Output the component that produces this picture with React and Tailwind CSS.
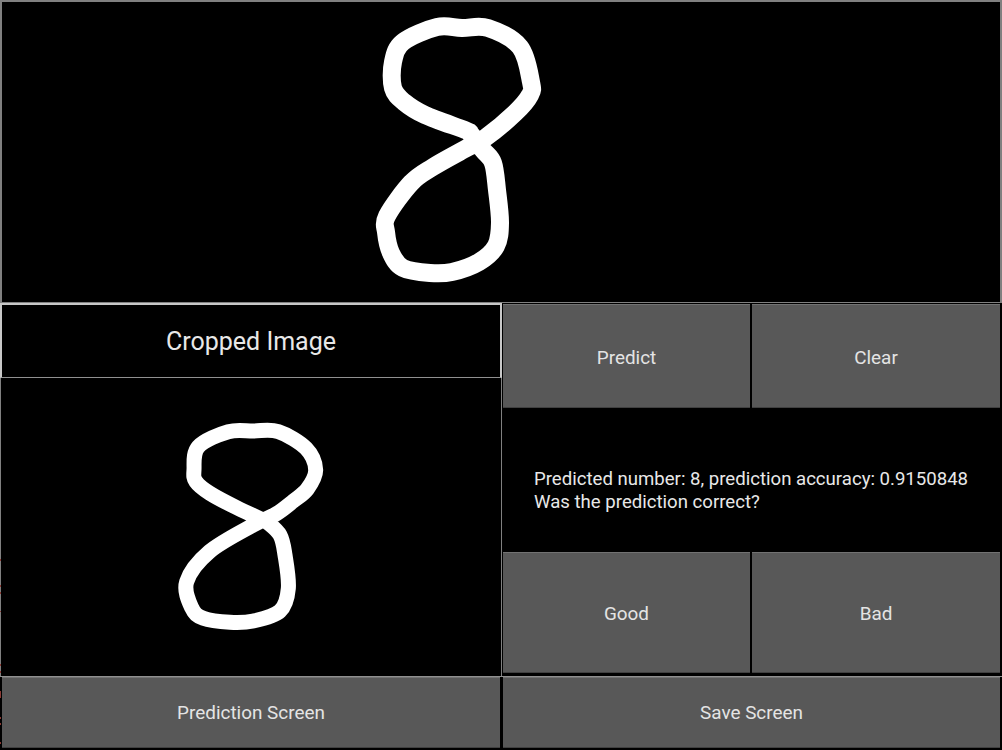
const big = [[470,133],[465,130],[425,115],[404,102],[393,88],[393,62],[403,42],[437,27],[462,28],[488,28],[520,47],[531,82],[530,95],[515,113],[485,138],[465,149],[433,167],[411,183],[387,216],[386,232],[391,253],[403,268],[430,273],[452,272],[479,262],[496,246],[500,223],[497,190],[493,163],[483,150],[470,133]];

const zoomSmall = [[290,320],[200,278],[120,235],[78,200],[72,165],[85,95],[175,50],[250,48],[325,50],[408,100],[437,165],[412,222],[370,258],[318,297],[250,330],[118,410],[50,500],[65,578],[100,610],[180,622],[250,618],[330,588],[355,520],[345,420],[330,360],[290,320]];
const small = zoomSmall.map(([x, y]) => [170 + x / 3, 415 + y / 3 - 378]);

const specks = [[559,2],[585,2],[592,2],[611,1],[664,2],[671,2],[691,7],[717,2],[723,2],[742,2]];

function smooth(p) {
  let d = `M${p[0][0]} ${p[0][1]}`;
  for (let i = 0; i < p.length - 1; i++) {
    const a = p[Math.max(i - 1, 0)], b = p[i], c = p[i + 1], e = p[Math.min(i + 2, p.length - 1)];
    d += ` C${b[0] + (c[0] - a[0]) / 6} ${b[1] + (c[1] - a[1]) / 6} ${c[0] - (e[0] - b[0]) / 6} ${c[1] - (e[1] - b[1]) / 6} ${c[0]} ${c[1]}`;
  }
  return d;
}

function Btn({ children, className = "" }) {
  return (
    <button className={`flex items-center justify-center bg-[#585858] border-t border-t-[#727272] border-b border-b-[#404040] text-[18.9px] text-[#e4e4e4] ${className}`}>
      {children}
    </button>
  );
}

export default function App() {
  return (
    <div className="relative w-[1002px] h-[750px] bg-black flex flex-col overflow-hidden font-['Roboto',sans-serif]">
      <div className="h-[303px] shrink-0 border-2 border-b border-[#808080] relative">
        <svg className="absolute top-[-2px] left-[-2px]" width="1002" height="303" viewBox="0 0 1002 303">
          <path d={smooth(big)} fill="none" stroke="#fff" strokeWidth="18" strokeLinejoin="round" strokeLinecap="round" />
        </svg>
      </div>
      <div className="h-[373px] shrink-0 flex">
        <div className="w-[502px] shrink-0 flex flex-col">
          <div className="h-[75px] shrink-0 border-2 border-b border-[#c8c8c8] border-b-[#909090] flex items-center justify-center text-[25px] text-[#e8e8e8] pt-[2px]">
            Cropped Image
          </div>
          <div className="flex-1 border-x border-[#808080] relative">
            <svg className="absolute top-0 left-[-1px]" width="502" height="298" viewBox="0 0 502 298">
              <path d={smooth(small)} fill="none" stroke="#fff" strokeWidth="15" strokeLinejoin="round" strokeLinecap="round" />
            </svg>
          </div>
        </div>
        <div className="flex-1 flex flex-col pl-[1px] pr-[2px] pt-[1px] pb-[3px]">
          <div className="h-[104px] shrink-0 flex gap-[2px]">
            <Btn className="w-[247px] pt-[4px]">Predict</Btn>
            <Btn className="flex-1 pt-[4px]">Clear</Btn>
          </div>
          <div className="flex-1 flex items-center pl-[31px] text-[18.6px] leading-[23px] text-[#e8e8e8] pt-[21px]">
            <p>Predicted number: 8, prediction accuracy: 0.9150848<br />Was the prediction correct?</p>
          </div>
          <div className="h-[121px] shrink-0 flex gap-[2px]">
            <Btn className="w-[247px] pt-[4px]">Good</Btn>
            <Btn className="flex-1 pt-[4px]">Bad</Btn>
          </div>
        </div>
      </div>
      <div className="h-[72px] shrink-0 flex pl-[2px] pr-[2px] border-t border-[#909090]">
        <Btn className="w-[498px] pt-[2px]">Prediction Screen</Btn>
        <Btn className="ml-[3px] flex-1 pt-[2px]">Save Screen</Btn>
      </div>
      {specks.map(([y, h]) => (
        <div key={y} className="absolute left-0 w-px bg-[#8a3a34]" style={{ top: y, height: h }} />
      ))}
    </div>
  );
}
